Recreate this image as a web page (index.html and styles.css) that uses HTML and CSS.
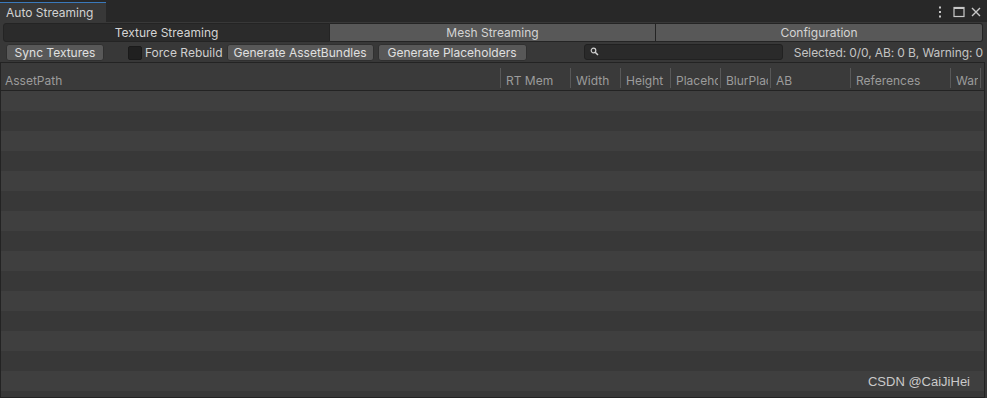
FILE: index.html
```html
<!DOCTYPE html>
<html>
<head>
<meta charset="utf-8">
<link rel="stylesheet" href="styles.css">
</head>
<body>
<div class="window">
  <div class="titlebar">
    <div class="tab">Auto Streaming</div>
    <div class="win-icons">
      <svg width="4" height="12" viewBox="0 0 4 12"><rect x="1" y="0.5" width="2" height="2" fill="#c8c8c8"/><rect x="1" y="5" width="2" height="2" fill="#c8c8c8"/><rect x="1" y="9.5" width="2" height="2" fill="#c8c8c8"/></svg>
      <svg width="12" height="12" viewBox="0 0 12 12"><rect x="1" y="1.5" width="10" height="9" fill="none" stroke="#c8c8c8" stroke-width="1.2"/><rect x="1" y="1" width="10" height="2" fill="#c8c8c8"/></svg>
      <svg width="12" height="12" viewBox="0 0 12 12"><path d="M2 2 L10 10 M10 2 L2 10" stroke="#c8c8c8" stroke-width="1.4"/></svg>
    </div>
  </div>
  <div class="content">
    <div class="tabstrip">
      <div class="seg seg-first active">Texture Streaming</div>
      <div class="seg">Mesh Streaming</div>
      <div class="seg seg-last">Configuration</div>
    </div>
    <div class="toolbar">
      <div class="btn btn-sync">Sync Textures</div>
      <label class="check"><span class="box"></span><span>Force Rebuild</span></label>
      <div class="btn btn-ab">Generate AssetBundles</div>
      <div class="btn btn-ph">Generate Placeholders</div>
      <div class="search">
        <svg width="9" height="9" viewBox="0 0 9 9"><circle cx="3.5" cy="3.5" r="2.3" fill="none" stroke="#d0d0d0" stroke-width="1.2"/><path d="M5.2 5.2 L8 8" stroke="#d0d0d0" stroke-width="1.5"/></svg>
      </div>
      <div class="status">Selected: 0/0, AB: 0 B, Warning: 0</div>
    </div>
    <div class="table">
      <div class="thead">
        <div class="col c-path"><span class="lbl">AssetPath</span></div>
        <div class="col c-rt"><span class="lbl">RT Mem</span></div>
        <div class="col c-w"><span class="lbl">Width</span></div>
        <div class="col c-h"><span class="lbl">Height</span></div>
        <div class="col c-ph"><span class="lbl">Placeholder</span></div>
        <div class="col c-blur"><span class="lbl">BlurPlaceholder</span></div>
        <div class="col c-ab"><span class="lbl">AB</span></div>
        <div class="col c-ref"><span class="lbl">References</span></div>
        <div class="col c-war"><span class="lbl">Warning</span></div>
      </div>
      <div class="rows">
        <div class="row"></div><div class="row"></div><div class="row"></div><div class="row"></div>
        <div class="row"></div><div class="row"></div><div class="row"></div><div class="row"></div>
        <div class="row"></div><div class="row"></div><div class="row"></div><div class="row"></div>
        <div class="row"></div><div class="row"></div><div class="row"></div><div class="row"></div>
      </div>
      <div class="watermark">CSDN @CaiJiHei</div>
    </div>
  </div>
</div>
</body>
</html>
```

FILE: styles.css
```css
* { box-sizing: border-box; }
html, body { margin: 0; padding: 0; }
body {
  width: 987px;
  height: 398px;
  overflow: hidden;
  background: #282828;
  font-family: Inter, "Noto Sans", sans-serif;
  font-size: 12px;
  color: #d2d2d2;
}
.window { width: 987px; height: 398px; display: flex; flex-direction: column; }
.titlebar {
  flex: 0 0 22px;
  height: 22px;
  display: flex;
  align-items: flex-end;
  justify-content: space-between;
  background: #282828;
}
.tab {
  width: 106px;
  height: 20px;
  border-top: 1px solid #3a79bb;
  background: #383838;
  padding-left: 6px;
  line-height: 19px;
  color: #d2d2d2;
}
.win-icons {
  align-self: center;
  display: flex;
  align-items: center;
  gap: 5px;
  padding-right: 5px;
  margin-top: 1px;
}
.win-icons svg { display: block; }
.win-icons svg:first-child { margin-right: 6px; }
.content {
  flex: 1 1 auto;
  min-height: 0;
  background: #383838;
  display: flex;
  flex-direction: column;
}
.tabstrip {
  display: flex;
  flex: 0 0 19px;
  margin: 1px 4px 0 3px;
  height: 19px;
}
.seg {
  flex: 1;
  background: #585858;
  border: 1px solid #242424;
  border-left: none;
  text-align: center;
  line-height: 17px;
  color: #d4d4d4;
}
.seg-first { border-left: 1px solid #242424; border-radius: 3px 0 0 3px; flex: 0 0 327px; }
.seg:nth-child(2) { flex: 0 0 326px; }
.seg-last { border-radius: 0 3px 3px 0; }
.seg.active { background: #2b2b2b; }
.toolbar {
  display: flex;
  flex: 0 0 19px;
  align-items: center;
  height: 19px;
  margin-top: 1px;
  padding: 0 4px 0 6px;
}
.btn {
  height: 17px;
  background: #585858;
  border: 1px solid #303030;
  border-radius: 3px;
  line-height: 15px;
  text-align: center;
  color: #e0e0e0;
}
.btn-sync { width: 98px; }
.check { display: flex; align-items: center; margin-left: 24px; color: #cfcfcf; }
.box {
  width: 14px; height: 14px;
  background: #202020;
  border: 1px solid #1a1a1a;
  border-radius: 2px;
  margin-right: 3px;
}
.btn-ab { width: 147px; margin-left: 4px; }
.btn-ph { width: 149px; margin-left: 4px; }
.search {
  width: 199px;
  height: 16px;
  margin-left: 57px;
  margin-top: -2px;
  background: #2a2a2a;
  border: 1px solid #212121;
  border-radius: 3px;
  padding-left: 5px;
  display: flex;
  align-items: center;
}
.search svg { display: block; }
.status { flex: 1; text-align: right; color: #c4c4c4; margin-top: -1px; white-space: nowrap; letter-spacing: -0.1px; }
.table {
  flex: 1 1 auto;
  min-height: 0;
  margin-right: 2px;
  border: 1px solid #232323;
  background: #383838;
  position: relative;
  display: flex;
  flex-direction: column;
  overflow: hidden;
}
.thead {
  height: 28px;
  display: flex;
  border-bottom: 1px solid #232323;
  background: #3a3a3a;
  flex: 0 0 28px;
}
.col {
  height: 100%;
  padding: 8px 0 0 5px;
  line-height: 19px;
  color: #9c9c9c;
  white-space: nowrap;
  position: relative;
  overflow: hidden;
}
.lbl { display: block; overflow: hidden; margin-right: 3px; }
.col::after {
  content: "";
  position: absolute;
  right: 0;
  top: 5px;
  bottom: 2px;
  width: 1px;
  background: #585858;
}
.c-path { width: 500px; padding-left: 4px; }
.c-rt { width: 70px; }
.c-w { width: 50px; }
.c-h { width: 50px; }
.c-ph { width: 50px; }
.c-blur { width: 50px; }
.c-ab { width: 80px; }
.c-ref { width: 100px; }
.c-war { width: 30px; }
.rows { display: flex; flex-direction: column; min-height: 0; overflow: hidden; flex: 1 1 auto; }
.row { height: 20px; background: #3f3f3f; flex: 0 0 20px; }
.row:nth-child(even) { background: #383838; }
.watermark {
  position: absolute;
  right: 14px;
  bottom: 8px;
  font-family: "Liberation Sans", Arial, sans-serif;
  font-size: 13px;
  color: #cacaca;
}
```
